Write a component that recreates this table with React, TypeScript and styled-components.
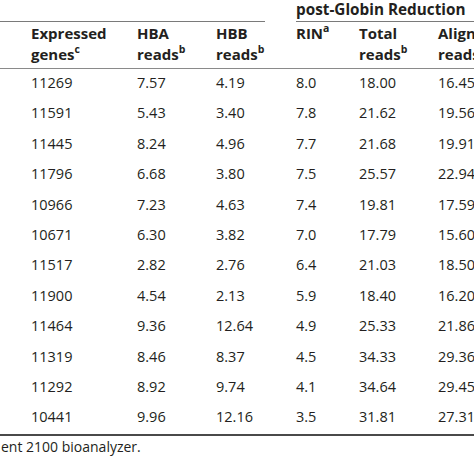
import React from 'react';
import styled, { createGlobalStyle } from 'styled-components';

const GlobalStyle = createGlobalStyle`
  html, body {
    margin: 0;
    padding: 0;
    background: #ffffff;
  }
  body {
    font-family: "Open Sans", "Noto Sans", "Liberation Sans", sans-serif;
    color: #231f20;
  }
`;

const Page = styled.div`
  width: 474px;
  height: 474px;
  overflow: hidden;
`;

const Grid = styled.div`
  display: grid;
  grid-template-columns: 31px 106px 79px 49px 31px 63px 79px 120px;
  width: 558px;
`;

const GroupCell = styled.div<{ $from: number; $to: number }>`
  grid-column: ${(p) => p.$from} / ${(p) => p.$to};
  font-size: 15.3px;
  font-weight: 700;
  line-height: 16px;
  height: 16px;
  padding-top: 1px;
  padding-bottom: 3.5px;
  border-bottom: 1.5px solid #7a7a7a;
  white-space: nowrap;
`;

const HeadCell = styled.div<{ $span?: number }>`
  grid-column: span ${(p) => p.$span ?? 1};
  font-size: 15px;
  font-weight: 700;
  line-height: 21px;
  padding-top: 1.5px;
  padding-bottom: 3px;
  border-bottom: 1.5px solid #8a8a8a;
  white-space: nowrap;

  sup {
    font-size: 10.5px;
    line-height: 0;
    position: relative;
    top: -1px;
  }
`;

const Cell = styled.div<{ $span?: number }>`
  grid-column: span ${(p) => p.$span ?? 1};
  font-size: 14.5px;
  line-height: 27.4px;
  height: 27.4px;
  padding-bottom: 3px;
  white-space: nowrap;
`;

const BottomRule = styled.div`
  grid-column: 1 / -1;
  height: 0;
  border-top: 2px solid #4a4a4a;
`;

const Footnote = styled.div`
  font-size: 14px;
  line-height: 20px;
  margin-top: 1px;
  padding-left: 1px;
  white-space: nowrap;
`;

type Row = [string, string, string, string, string, string];

const rows: Row[] = [
  ['11269', '7.57', '4.19', '8.0', '18.00', '16.45'],
  ['11591', '5.43', '3.40', '7.8', '21.62', '19.56'],
  ['11445', '8.24', '4.96', '7.7', '21.68', '19.91'],
  ['11796', '6.68', '3.80', '7.5', '25.57', '22.94'],
  ['10966', '7.23', '4.63', '7.4', '19.81', '17.59'],
  ['10671', '6.30', '3.82', '7.0', '17.79', '15.60'],
  ['11517', '2.82', '2.76', '6.4', '21.03', '18.50'],
  ['11900', '4.54', '2.13', '5.9', '18.40', '16.20'],
  ['11464', '9.36', '12.64', '4.9', '25.33', '21.86'],
  ['11319', '8.46', '8.37', '4.5', '34.33', '29.36'],
  ['11292', '8.92', '9.74', '4.1', '34.64', '29.45'],
  ['10441', '9.96', '12.16', '3.5', '31.81', '27.31'],
];

export default function App() {
  return (
    <Page>
      <GlobalStyle />
      <Grid>
        <GroupCell $from={1} $to={5} />
        <div />
        <GroupCell $from={6} $to={9}>post-Globin Reduction</GroupCell>

        <HeadCell />
        <HeadCell>
          Expressed
          <br />
          genes<sup>c</sup>
        </HeadCell>
        <HeadCell>
          HBA
          <br />
          reads<sup>b</sup>
        </HeadCell>
        <HeadCell $span={2}>
          HBB
          <br />
          reads<sup>b</sup>
        </HeadCell>
        <HeadCell>
          RIN<sup>a</sup>
        </HeadCell>
        <HeadCell>
          Total
          <br />
          reads<sup>b</sup>
        </HeadCell>
        <HeadCell>
          Aligned
          <br />
          reads<sup>b</sup>
        </HeadCell>

        {rows.map((r) => (
          <React.Fragment key={r[0]}>
            <Cell />
            <Cell>{r[0]}</Cell>
            <Cell>{r[1]}</Cell>
            <Cell $span={2}>{r[2]}</Cell>
            <Cell>{r[3]}</Cell>
            <Cell>{r[4]}</Cell>
            <Cell>{r[5]}</Cell>
          </React.Fragment>
        ))}

        <BottomRule />
      </Grid>
      <Footnote>ent 2100 bioanalyzer.</Footnote>
    </Page>
  );
}
